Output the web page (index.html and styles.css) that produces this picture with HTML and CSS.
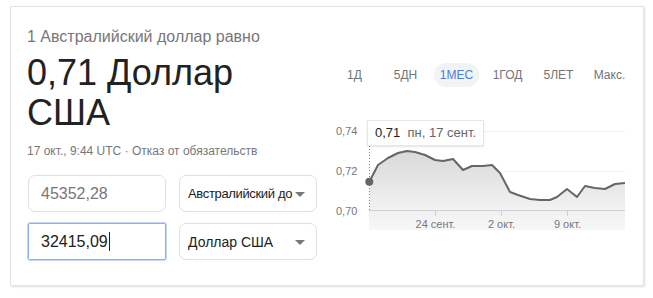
FILE: index.html
```html
<!DOCTYPE html>
<html lang="ru">
<head>
<meta charset="utf-8">
<link rel="stylesheet" href="styles.css">
</head>
<body>
<div class="card">
  <div class="left">
    <div class="title">1 Австралийский доллар равно</div>
    <div class="big">0,71 Доллар<br>США</div>
    <div class="sub">17 окт., 9:44 UTC · Отказ от обязательств</div>
    <div class="row">
      <div class="field muted">45352,28</div>
      <div class="select"><span class="sel-text tight">Австралийский до</span><span class="arrow"></span></div>
    </div>
    <div class="row">
      <div class="field focused">32415,09<span class="caret"></span></div>
      <div class="select"><span class="sel-text">Доллар США</span><span class="arrow"></span></div>
    </div>
  </div>
  <div class="right">
    <div class="tabs">
      <div class="tab">1Д</div>
      <div class="tab">5ДН</div>
      <div class="tab active"><span>1МЕС</span></div>
      <div class="tab">1ГОД</div>
      <div class="tab">5ЛЕТ</div>
      <div class="tab">Макс.</div>
    </div>
    <div class="chart">
      <svg width="300" height="120" viewBox="0 0 300 120">
        <defs>
          <linearGradient id="fillg" x1="0" y1="0" x2="0" y2="1">
            <stop offset="0" stop-color="#d9d9d9"/>
            <stop offset="1" stop-color="#f2f2f2"/>
          </linearGradient>
          <linearGradient id="bandg" x1="0" y1="0" x2="0" y2="1">
            <stop offset="0" stop-color="#f0f0f0"/>
            <stop offset="1" stop-color="#f7f7f7"/>
          </linearGradient>
        </defs>
        <line x1="39" y1="16.5" x2="295" y2="16.5" stroke="#f2f2f2"/>
        <line x1="39" y1="56.5" x2="295" y2="56.5" stroke="#f2f2f2"/>
        <rect x="39" y="95" width="256" height="20" fill="url(#bandg)"/>
        <path d="M39.3,66.7 L48,50 L58,43 L68,38 L77,36 L85,37 L95,40 L105,45 L113,46 L123,44 L133,55 L142,51 L153,51 L162,50 L170,58 L180,77 L188,80 L200,84 L210,85 L220,85 L227,82 L237,74 L247,82 L255,71 L265,73 L275,74 L285,69 L295,68 L295,95 L39.3,95 Z" fill="url(#fillg)"/>
        <line x1="39" y1="95.5" x2="295" y2="95.5" stroke="#cfcfcf"/>
        <line x1="105.5" y1="95" x2="105.5" y2="101" stroke="#cfcfcf"/>
        <line x1="171.5" y1="95" x2="171.5" y2="101" stroke="#cfcfcf"/>
        <line x1="237.5" y1="95" x2="237.5" y2="101" stroke="#cfcfcf"/>
        <line x1="39.5" y1="31" x2="39.5" y2="95" stroke="#888" stroke-dasharray="1 2"/>
        <path d="M39.3,66.7 L48,50 L58,43 L68,38 L77,36 L85,37 L95,40 L105,45 L113,46 L123,44 L133,55 L142,51 L153,51 L162,50 L170,58 L180,77 L188,80 L200,84 L210,85 L220,85 L227,82 L237,74 L247,82 L255,71 L265,73 L275,74 L285,69 L295,68" fill="none" stroke="#666" stroke-width="2" stroke-linejoin="round"/>
        <circle cx="39.3" cy="66.7" r="4" fill="#666"/>
        <g class="axis">
          <text x="6" y="20">0,74</text>
          <text x="6" y="60">0,72</text>
          <text x="6" y="100">0,70</text>
          <text x="105.5" y="113" text-anchor="middle">24 сент.</text>
          <text x="171.5" y="113" text-anchor="middle">2 окт.</text>
          <text x="237.5" y="113" text-anchor="middle">9 окт.</text>
        </g>
      </svg>
      <div class="tooltip"><b>0,71</b>&nbsp; пн, 17 сент.</div>
    </div>
  </div>
</div>
</body>
</html>
```

FILE: styles.css
```css
html, body {
  margin: 0;
  padding: 0;
  background: #fff;
  font-family: "Liberation Sans", Arial, sans-serif;
}
.card {
  position: absolute;
  left: 10px;
  top: 6px;
  width: 634px;
  height: 280px;
  box-sizing: border-box;
  border: 1px solid #e3e3e3;
  box-shadow: 1px 1px 2px rgba(0,0,0,0.12);
  padding: 20px 0 0 16px;
  display: flex;
}
.left {
  width: 290px;
}
.title {
  font-size: 16px;
  line-height: 20px;
  color: #777;
}
.big {
  margin-top: 6px;
  font-size: 36px;
  line-height: 40px;
  color: #222;
}
.sub {
  margin-top: 10px;
  font-size: 12px;
  line-height: 16px;
  color: #777;
}
.row {
  display: flex;
  gap: 13px;
  margin-top: 16px;
  padding-left: 1px;
}
.row + .row {
  margin-top: 11px;
}
.field, .select {
  width: 139px;
  height: 37px;
  box-sizing: border-box;
  border: 1px solid #e0e0e0;
  border-radius: 7px;
  display: flex;
  align-items: center;
}
.field {
  padding-left: 12px;
  font-size: 16px;
  color: #222;
}
.field.muted {
  color: #777;
}
.field.focused {
  border: 1px solid #8ab0ef;
  border-radius: 2px;
  box-shadow: 0 0 0 1px #c5d8f8;
}
.caret {
  display: inline-block;
  width: 1px;
  height: 19px;
  background: #222;
  margin-left: 1px;
}
.select {
  padding-left: 8px;
  font-size: 14px;
  color: #222;
  position: relative;
}
.sel-text {
  white-space: nowrap;
  overflow: hidden;
  width: 110px;
}
.sel-text.tight {
  font-size: 13px;
  letter-spacing: -0.35px;
}
.arrow {
  position: absolute;
  right: 11px;
  top: 16px;
  width: 0;
  height: 0;
  border-left: 5px solid transparent;
  border-right: 5px solid transparent;
  border-top: 5px solid #777;
}
.right {
  margin-left: 12px;
}
.tabs {
  display: flex;
  margin-top: 36px;
}
.tab {
  width: 51px;
  height: 24px;
  display: flex;
  align-items: center;
  justify-content: center;
  font-size: 12px;
  color: #70757a;
}
.tab.active span {
  background: #f1f3f4;
  color: #4a7fe0;
  border-radius: 12px;
  padding: 0 6px;
  height: 24px;
  line-height: 24px;
}
.chart {
  position: relative;
  margin-top: 28px;
  margin-left: 1px;
  width: 300px;
  height: 120px;
}
.chart svg {
  display: block;
}
.axis text {
  font-family: "Liberation Sans", Arial, sans-serif;
  font-size: 11px;
  fill: #777;
}
.tooltip {
  position: absolute;
  left: 37px;
  top: 5px;
  height: 26px;
  box-sizing: border-box;
  padding: 0 7px;
  background: #fff;
  border: 1px solid #e6e6e6;
  box-shadow: 0 1px 2px rgba(0,0,0,0.1);
  font-size: 13px;
  line-height: 24px;
  color: #666;
  white-space: nowrap;
}
.tooltip b {
  font-weight: normal;
  color: #222;
}
```
